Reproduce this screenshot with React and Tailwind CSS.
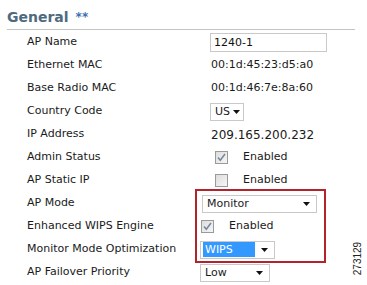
import { useState } from "react";

function Checkbox({ checked }) {
  return (
    <svg width="13" height="13" viewBox="0 0 13 13" className="block">
      <defs>
        <linearGradient id="cbg" x1="0" y1="0" x2="1" y2="1">
          <stop offset="0" stopColor="#dcdcdc" />
          <stop offset="1" stopColor="#f7f7f7" />
        </linearGradient>
      </defs>
      <rect x="0.5" y="0.5" width="12" height="12" fill="url(#cbg)" stroke="#9a9a9a" />
      {checked && (
        <path d="M3 6.5 L5.3 9.3 L10 3" fill="none" stroke="#74879a" strokeWidth="1.5" />
      )}
    </svg>
  );
}

function Select({ value, width, highlight, arrowGap = "mr-[6px]" }) {
  return (
    <div
      className={`flex items-center h-[18px] border border-[#c9c9c9] bg-white ${width}`}
    >
      <span
        className={`ml-[2px] pl-[2px] flex-1 leading-[15px] ${
          highlight ? "bg-[#3399ff] text-white mr-[6px]" : ""
        }`}
      >
        {value}
      </span>
      <svg width="7" height="4" viewBox="0 0 7 4" className={`${arrowGap} shrink-0`}>
        <path d="M0 0 H7 L3.5 4 Z" fill="#111" />
      </svg>
    </div>
  );
}

function Enabled({ checked, left }) {
  return (
    <div className={`flex items-center ${left}`}>
      <Checkbox checked={checked} />
      <span className="ml-[15px]">Enabled</span>
    </div>
  );
}

export default function App() {
  const [apName, setApName] = useState("1240-1");

  const rows = [
    {
      label: "AP Name",
      value: (
        <input
          value={apName}
          onChange={(e) => setApName(e.target.value)}
          className="w-[117px] h-[19px] border border-[#c9c9c9] px-[3px] outline-none text-[#111]"
        />
      ),
    },
    { label: "Ethernet MAC", value: <span className="ml-px">00:1d:45:23:d5:a0</span> },
    { label: "Base Radio MAC", value: <span className="ml-px">00:1d:46:7e:8a:60</span> },
    { label: "Country Code", value: <Select value="US" width="w-[34px]" arrowGap="mr-[3px]" /> },
    { label: "IP Address", value: <span className="ml-px text-[12px]">209.165.200.232</span> },
    { label: "Admin Status", value: <Enabled checked left="ml-[5px]" /> },
    { label: "AP Static IP", value: <Enabled left="ml-[5px]" /> },
    {
      label: "AP Mode",
      value: (
        <div className="-ml-[8px]">
          <Select value="Monitor" width="w-[115px]" />
        </div>
      ),
    },
    { label: "Enhanced WIPS Engine", value: <Enabled checked left="-ml-[9px]" /> },
    {
      label: "Monitor Mode Optimization",
      value: (
        <div className="-ml-[10px]">
          <Select value="WIPS" width="w-[75px]" highlight />
        </div>
      ),
    },
    {
      label: "AP Failover Priority",
      value: (
        <div className="-ml-[10px]">
          <Select value="Low" width="w-[70px]" />
        </div>
      ),
    },
  ];

  return (
    <div
      className="relative w-[367px] h-[285px] bg-white overflow-hidden text-[11px] text-[#1a1a1a]"
      style={{ fontFamily: "'DejaVu Sans', Verdana, sans-serif" }}
    >
      <div className="ml-[7px] w-[348px] pt-[5px]">
        <div className="h-[24px] flex items-center text-[14px] font-bold text-[#4e6a7f]">
          General
          <span className="ml-[7px] text-[#3c6fb6] text-[12px]">**</span>
        </div>
        <div className="h-px bg-[#c4c4c4]" />
        <div className="pt-[1px]">
          {rows.map((r) => (
            <div key={r.label} className="grid grid-cols-[203px_1fr] h-[23px] items-center">
              <div className="pl-[20px]">{r.label}</div>
              <div className="flex">{r.value}</div>
            </div>
          ))}
        </div>
      </div>

      <div className="absolute left-[195px] top-[189px] w-[131px] h-[74px] border-2 border-[#b3232b] pointer-events-none" />

      <div
        className="absolute left-[336px] top-[251px] w-[42px] text-[10px] text-[#222] -rotate-90 text-center"
        style={{ fontFamily: "'Liberation Sans', Arial, sans-serif" }}
      >
        273129
      </div>
    </div>
  );
}
